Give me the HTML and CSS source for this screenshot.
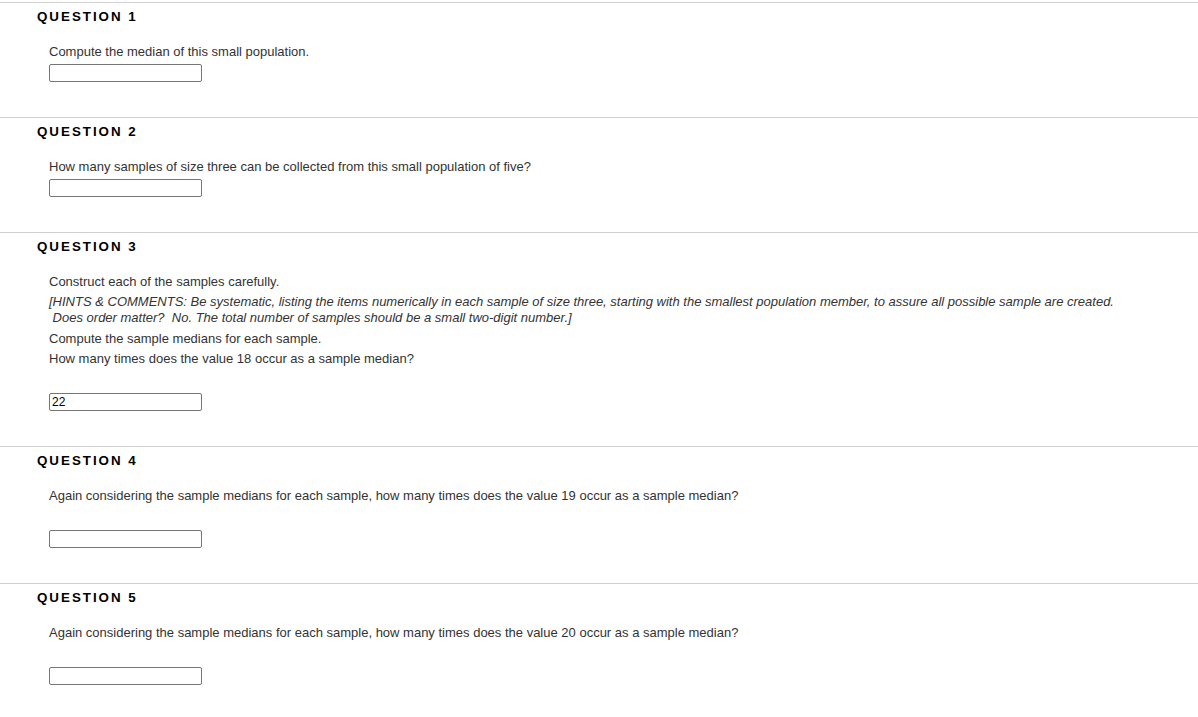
FILE: index.html
```html
<!DOCTYPE html>
<html>
<head>
<meta charset="utf-8">
<link rel="stylesheet" href="styles.css">
</head>
<body>
<div class="page">
  <section class="question">
    <h3 class="q-title">QUESTION 1</h3>
    <div class="q-body">
      <p class="q-text">Compute the median of this small population.</p>
      <input class="answer tight" type="text">
    </div>
  </section>
  <section class="question">
    <h3 class="q-title">QUESTION 2</h3>
    <div class="q-body">
      <p class="q-text">How many samples of size three can be collected from this small population of five?</p>
      <input class="answer tight-2" type="text">
    </div>
  </section>
  <section class="question">
    <h3 class="q-title">QUESTION 3</h3>
    <div class="q-body">
      <p class="q-text">Construct each of the samples carefully.</p>
      <p class="q-text hint">[HINTS &amp; COMMENTS: Be systematic, listing the items numerically in each sample of size three, starting with the smallest population member, to assure all possible sample are created. &nbsp;Does order matter?&nbsp; No. The total number of samples should be a small two-digit number.]</p>
      <p class="q-text">Compute the sample medians for each sample.</p>
      <p class="q-text">How many times does the value 18 occur as a sample median?</p>
      <input class="answer" type="text" value="22">
    </div>
  </section>
  <section class="question">
    <h3 class="q-title">QUESTION 4</h3>
    <div class="q-body">
      <p class="q-text">Again considering the sample medians for each sample, how many times does the value 19 occur as a sample median?</p>
      <input class="answer" type="text">
    </div>
  </section>
  <section class="question">
    <h3 class="q-title">QUESTION 5</h3>
    <div class="q-body">
      <p class="q-text">Again considering the sample medians for each sample, how many times does the value 20 occur as a sample median?</p>
      <input class="answer" type="text">
    </div>
  </section>
</div>
</body>
</html>
```
FILE: styles.css
```css
html, body {
  margin: 0;
  padding: 0;
  background: #fff;
}
body {
  font-family: "Liberation Sans", Arial, sans-serif;
  color: #333;
}
.page {
  padding-top: 2px;
}
.question {
  border-top: 1px solid #d0d0d0;
  padding: 6px 0 35px 37px;
}
.q-title {
  margin: 0;
  font-size: 13.33px;
  line-height: 16px;
  font-weight: bold;
  letter-spacing: 2px;
  color: #000;
}
.q-body {
  padding: 19px 68px 0 12px;
}
.q-text {
  margin: 0 0 4px 0;
  font-size: 13px;
  line-height: 16px;
}
.q-text.hint {
  font-style: italic;
  margin-bottom: 5px;
}
.answer {
  display: block;
  box-sizing: border-box;
  width: 153px;
  height: 18px;
  margin: 26px 0 0 0;
  padding: 1px 2px;
  border: 1px solid #767676;
  border-radius: 2px;
  font-family: "Liberation Sans", Arial, sans-serif;
  font-size: 12px;
  color: #000;
  background: #fff;
  outline: none;
}
.answer.tight {
  margin-top: 1px;
}
.answer.tight-2 {
  margin-top: 2px;
}
```
